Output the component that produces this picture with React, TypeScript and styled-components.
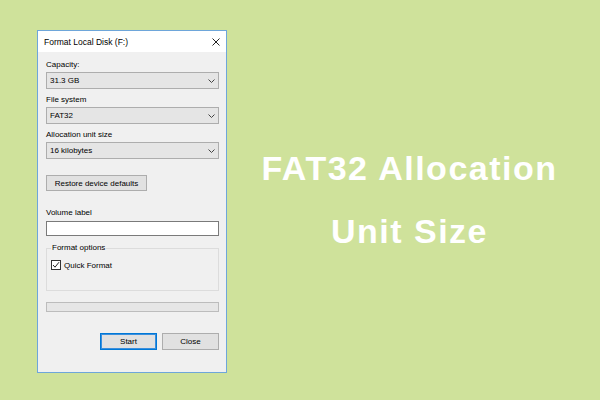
import { createGlobalStyle, styled } from 'styled-components';

const GlobalStyle = createGlobalStyle`
  html, body {
    margin: 0;
    padding: 0;
  }

  body {
    font-family: "Liberation Sans", Arial, sans-serif;
    background: #cfe29b;
  }
`;

const Root = styled.div`
  width: 600px;
  height: 400px;
  box-sizing: border-box;
  padding-left: 37px;
  display: flex;
  flex-direction: row;
  align-items: center;
  background: #cfe29b;
`;

const Dialog = styled.div`
  width: 190px;
  height: 343px;
  box-sizing: border-box;
  align-self: flex-start;
  margin-top: 30px;
  border: 1px solid #6ea6da;
  background: #f0f0f0;
  display: flex;
  flex-direction: column;
  flex-shrink: 0;
`;

const TitleBar = styled.div`
  height: 21px;
  background: #ffffff;
  display: flex;
  align-items: center;
  justify-content: space-between;
  padding: 0 6px;
  font-size: 8.5px;
  color: #000000;
`;

const Body = styled.div`
  padding: 7px 7px 0 8px;
  display: flex;
  flex-direction: column;
`;

const FieldLabel = styled.div<{ $gap?: number }>`
  margin-top: ${({ $gap }) => $gap ?? 0}px;
  font-size: 8px;
  line-height: 12px;
  color: #000000;
`;

const Combo = styled.div`
  height: 17px;
  box-sizing: border-box;
  margin-top: 1px;
  padding: 0 3px;
  border: 1px solid #adadad;
  background: #e5e5e5;
  display: flex;
  align-items: center;
  justify-content: space-between;
  font-size: 8px;
  color: #000000;
`;

const RestoreButton = styled.div`
  align-self: flex-start;
  margin-top: 16px;
  width: 101px;
  height: 16px;
  box-sizing: border-box;
  border: 1px solid #adadad;
  background: #e1e1e1;
  display: flex;
  align-items: center;
  justify-content: center;
  font-size: 8px;
  color: #000000;
`;

const TextInput = styled.div`
  margin-top: 2px;
  height: 15px;
  box-sizing: border-box;
  border: 1px solid #7a7a7a;
  background: #ffffff;
`;

const OptionsGroup = styled.fieldset`
  margin: 6px 0 0 0;
  padding: 0 4px 20px 4px;
  border: 1px solid #dcdcdc;
  min-width: 0;
`;

const OptionsLegend = styled.legend`
  padding: 0 1px;
  font-size: 8px;
  line-height: 12px;
  color: #000000;
`;

const CheckRow = styled.div`
  margin-top: 6px;
  height: 10px;
  display: flex;
  align-items: center;
  gap: 3px;
  font-size: 8px;
  color: #000000;
`;

const CheckBox = styled.div`
  width: 10px;
  height: 10px;
  box-sizing: border-box;
  border: 1px solid #333333;
  background: #ffffff;
  display: flex;
  align-items: center;
  justify-content: center;
`;

const ProgressBar = styled.div`
  margin-top: 11px;
  height: 10px;
  box-sizing: border-box;
  border: 1px solid #bcbcbc;
  background: #e6e6e6;
`;

const ButtonRow = styled.div`
  margin-top: 21px;
  display: flex;
  justify-content: flex-end;
  gap: 5px;
`;

const DialogButton = styled.div<{ $primary?: boolean }>`
  width: 57px;
  height: 17px;
  box-sizing: border-box;
  border: 1px solid ${({ $primary }) => ($primary ? '#0078d7' : '#adadad')};
  box-shadow: ${({ $primary }) => ($primary ? 'inset 0 0 0 1px #3c8fdc' : 'none')};
  background: #e1e1e1;
  display: flex;
  align-items: center;
  justify-content: center;
  font-size: 8px;
  color: #000000;
`;

const TextPanel = styled.div`
  flex: 1;
  padding-right: 8px;
  display: flex;
  flex-direction: column;
  align-items: center;
`;

const Headline = styled.div`
  margin: 0;
  color: #ffffff;
  font-family: "Liberation Sans", Arial, sans-serif;
  font-weight: 700;
  font-size: 34px;
  letter-spacing: 1.5px;
  line-height: 63px;
  text-align: center;
  white-space: nowrap;
`;

function CloseIcon() {
  return (
    <svg width="8" height="8" viewBox="0 0 8 8">
      <path d="M0.5 0.5 L7.5 7.5 M7.5 0.5 L0.5 7.5" stroke="#222" strokeWidth="1" fill="none" />
    </svg>
  );
}

function Chevron() {
  return (
    <svg width="7" height="4" viewBox="0 0 7 4">
      <path d="M0.5 0.5 L3.5 3.5 L6.5 0.5" stroke="#444" strokeWidth="1" fill="none" />
    </svg>
  );
}

function CheckMark() {
  return (
    <svg width="8" height="8" viewBox="0 0 8 8">
      <path d="M1 4 L3 6.2 L7 1.2" stroke="#222" strokeWidth="1" fill="none" />
    </svg>
  );
}

const fields = [
  { label: 'Capacity:', value: '31.3 GB' },
  { label: 'File system', value: 'FAT32' },
  { label: 'Allocation unit size', value: '16 kilobytes' },
];

export default function App() {
  return (
    <>
      <GlobalStyle />
      <Root>
        <Dialog>
          <TitleBar>
            <span>Format Local Disk (F:)</span>
            <CloseIcon />
          </TitleBar>
          <Body>
            {fields.map((field, index) => (
              <div key={field.label}>
                <FieldLabel $gap={index === 0 ? 0 : 5}>{field.label}</FieldLabel>
                <Combo>
                  <span>{field.value}</span>
                  <Chevron />
                </Combo>
              </div>
            ))}
            <RestoreButton>Restore device defaults</RestoreButton>
            <FieldLabel $gap={16}>Volume label</FieldLabel>
            <TextInput />
            <OptionsGroup>
              <OptionsLegend>Format options</OptionsLegend>
              <CheckRow>
                <CheckBox>
                  <CheckMark />
                </CheckBox>
                <span>Quick Format</span>
              </CheckRow>
            </OptionsGroup>
            <ProgressBar />
            <ButtonRow>
              <DialogButton $primary>Start</DialogButton>
              <DialogButton>Close</DialogButton>
            </ButtonRow>
          </Body>
        </Dialog>
        <TextPanel>
          <Headline>FAT32 Allocation</Headline>
          <Headline>Unit Size</Headline>
        </TextPanel>
      </Root>
    </>
  );
}
